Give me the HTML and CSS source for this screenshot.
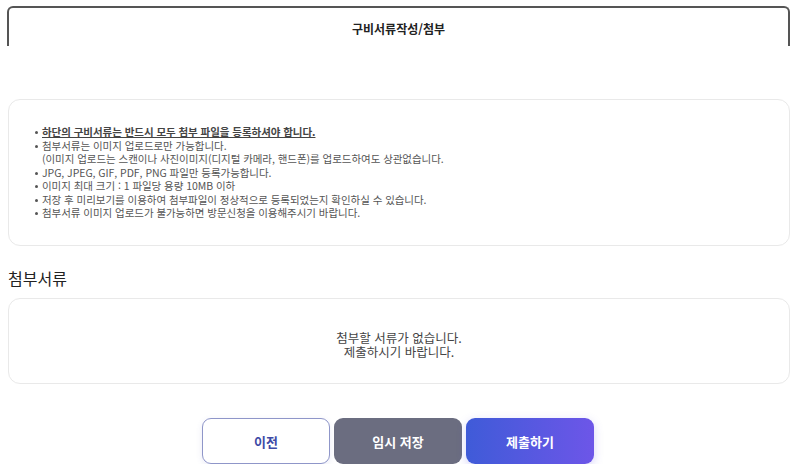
FILE: index.html
```html
<!DOCTYPE html>
<html lang="ko">
<head>
<meta charset="utf-8">
<link rel="stylesheet" href="styles.css">
</head>
<body>
<div class="page">
  <div class="tab"><span class="tab-title">구비서류작성/첨부</span></div>
  <div class="notice">
    <ul class="notice-list">
      <li class="strong">하단의 구비서류는 반드시 모두 첨부 파일을 등록하셔야 합니다.</li>
      <li>첨부서류는 이미지 업로드로만 가능합니다.<br>(이미지 업로드는 스캔이나 사진이미지(디지털 카메라, 핸드폰)를 업로드하여도 상관없습니다.</li>
      <li>JPG, JPEG, GIF, PDF, PNG 파일만 등록가능합니다.</li>
      <li>이미지 최대 크기 : 1 파일당 용량 10MB 이하</li>
      <li>저장 후 미리보기를 이용하여 첨부파일이 정상적으로 등록되었는지 확인하실 수 있습니다.</li>
      <li>첨부서류 이미지 업로드가 불가능하면 방문신청을 이용해주시기 바랍니다.</li>
    </ul>
  </div>
  <h2 class="section-title">첨부서류</h2>
  <div class="empty">
    <div class="empty-text">
      <span class="empty-line">첨부할 서류가 없습니다.</span>
      <span class="empty-line">제출하시기 바랍니다.</span>
    </div>
  </div>
  <div class="actions">
    <button class="btn btn-prev">이전</button>
    <button class="btn btn-save">임시 저장</button>
    <button class="btn btn-submit">제출하기</button>
  </div>
</div>
</body>
</html>
```

FILE: styles.css
```css
* { box-sizing: border-box; }
html, body { margin: 0; padding: 0; background: #fff; }
body {
  font-family: "Noto Sans CJK KR", "Noto Sans", sans-serif;
  color: #333;
}
.page {
  width: 782px;
  margin-left: 8px;
  padding-top: 6px;
}
.tab {
  margin-left: -1px;
  height: 40px;
  border: 2px solid #555;
  border-bottom: none;
  border-radius: 6px 6px 0 0;
  text-align: center;
  padding-top: 7px;
}
.tab-title {
  font-size: 12px;
  line-height: 16px;
  font-weight: 700;
  color: #222;
}
.notice {
  margin-top: 53px;
  height: 147px;
  border: 1px solid #e9e9e9;
  border-radius: 12px;
  padding: 25px 0 0 25px;
}
.notice-list {
  list-style: none;
  margin: 0;
  padding: 0;
  font-size: 10.5px;
  line-height: 13.5px;
  color: #555;
  letter-spacing: -0.05px;
}
.notice-list li {
  position: relative;
  padding-left: 8px;
}
.notice-list li::before {
  content: "";
  position: absolute;
  left: 1px;
  top: 6px;
  width: 3px;
  height: 3px;
  border-radius: 50%;
  background: #555;
}
.notice-list li.strong {
  font-weight: 700;
  color: #444;
  text-decoration: underline;
}
.section-title {
  margin: 20px 0 0 0;
  height: 32px;
  font-size: 16px;
  line-height: 24px;
  font-weight: 400;
  color: #222;
}
.empty {
  height: 86px;
  border: 1px solid #e9e9e9;
  border-radius: 12px;
  display: flex;
  align-items: center;
  justify-content: center;
}
.empty-text {
  padding-top: 7px;
  display: flex;
  flex-direction: column;
  align-items: center;
  gap: 0;
}
.empty-line {
  display: block;
  font-size: 12.5px;
  line-height: 13.5px;
  color: #444;
}
.actions {
  margin-top: 34px;
  display: flex;
  justify-content: center;
  gap: 4px;
  padding-right: 2px;
}
.btn {
  width: 128px;
  height: 46px;
  border-radius: 9px;
  font-family: "Noto Sans CJK KR", sans-serif;
  font-size: 13px;
  font-weight: 700;
  border: none;
  cursor: pointer;
}
.btn-prev {
  background: #fff;
  border: 1px solid #8f96c9;
  color: #3d4aa6;
  box-shadow: 0 2px 6px rgba(80, 90, 180, 0.12);
}
.btn-save {
  background: #6b6d80;
  color: #fff;
}
.btn-submit {
  background: linear-gradient(90deg, #3f5bd8, #6d56e8);
  color: #fff;
  box-shadow: 0 3px 10px rgba(100, 90, 230, 0.25);
}
```
